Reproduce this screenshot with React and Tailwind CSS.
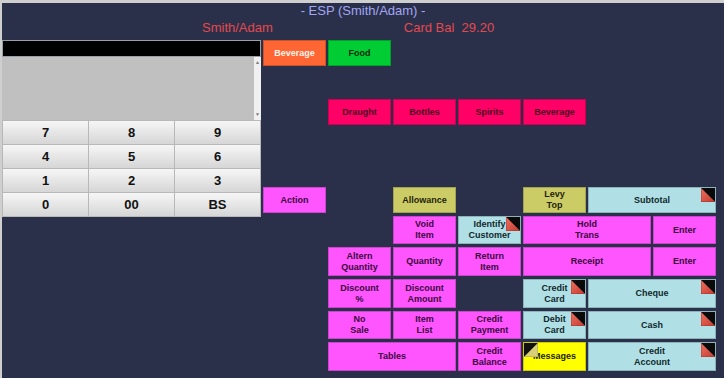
import React from 'react';

const KEYS = ['7', '8', '9', '4', '5', '6', '1', '2', '3', '0', '00', 'BS'];

const COLORS = {
    orange: 'bg-[#ff6633] text-[#fff4ee]',
    green: 'bg-[#00cc33] text-[#0b2a10]',
    crimson: 'bg-[#ff0066] text-[#4a0020]',
    pink: 'bg-[#ff55ff] text-[#3a0a3a]',
    khaki: 'bg-[#cccc66] text-[#1f1f0a]',
    blue: 'bg-[#b0e0e6] text-[#10282c]',
    yellow: 'bg-[#ffff00] text-[#222200]',
};

// row / col are grid lines (1-based), span is how many columns
const BUTTONS = [
    { label: 'Beverage', c: 'orange', row: 'row-start-1', col: 'col-start-1' },
    { label: 'Food', c: 'green', row: 'row-start-1', col: 'col-start-2' },

    { label: 'Draught', c: 'crimson', row: 'row-start-3', col: 'col-start-2' },
    { label: 'Bottles', c: 'crimson', row: 'row-start-3', col: 'col-start-3' },
    { label: 'Spirits', c: 'crimson', row: 'row-start-3', col: 'col-start-4' },
    { label: 'Beverage', c: 'crimson', row: 'row-start-3', col: 'col-start-5' },

    { label: 'Action', c: 'pink', row: 'row-start-5', col: 'col-start-1' },
    { label: 'Allowance', c: 'khaki', row: 'row-start-5', col: 'col-start-3' },
    { label: ['Levy', 'Top'], c: 'khaki', row: 'row-start-5', col: 'col-start-5' },
    { label: 'Subtotal', c: 'blue', row: 'row-start-5', col: 'col-start-6 col-span-2', fold: 'right' },

    { label: ['Void', 'Item'], c: 'pink', row: 'row-start-6', col: 'col-start-3' },
    { label: ['Identify', 'Customer'], c: 'blue', row: 'row-start-6', col: 'col-start-4', fold: 'right' },
    { label: ['Hold', 'Trans'], c: 'pink', row: 'row-start-6', col: 'col-start-5 col-span-2' },
    { label: 'Enter', c: 'pink', row: 'row-start-6', col: 'col-start-7' },

    { label: ['Altern', 'Quantity'], c: 'pink', row: 'row-start-7', col: 'col-start-2' },
    { label: 'Quantity', c: 'pink', row: 'row-start-7', col: 'col-start-3' },
    { label: ['Return', 'Item'], c: 'pink', row: 'row-start-7', col: 'col-start-4' },
    { label: 'Receipt', c: 'pink', row: 'row-start-7', col: 'col-start-5 col-span-2' },
    { label: 'Enter', c: 'pink', row: 'row-start-7', col: 'col-start-7' },

    { label: ['Discount', '%'], c: 'pink', row: 'row-start-8', col: 'col-start-2' },
    { label: ['Discount', 'Amount'], c: 'pink', row: 'row-start-8', col: 'col-start-3' },
    { label: ['Credit', 'Card'], c: 'blue', row: 'row-start-8', col: 'col-start-5', fold: 'right' },
    { label: 'Cheque', c: 'blue', row: 'row-start-8', col: 'col-start-6 col-span-2', fold: 'right' },

    { label: ['No', 'Sale'], c: 'pink', row: 'row-start-9', col: 'col-start-2' },
    { label: ['Item', 'List'], c: 'pink', row: 'row-start-9', col: 'col-start-3' },
    { label: ['Credit', 'Payment'], c: 'pink', row: 'row-start-9', col: 'col-start-4' },
    { label: ['Debit', 'Card'], c: 'blue', row: 'row-start-9', col: 'col-start-5', fold: 'right' },
    { label: 'Cash', c: 'blue', row: 'row-start-9', col: 'col-start-6 col-span-2', fold: 'right' },

    { label: 'Tables', c: 'pink', row: 'row-start-10', col: 'col-start-2 col-span-2' },
    { label: ['Credit', 'Balance'], c: 'pink', row: 'row-start-10', col: 'col-start-4' },
    { label: 'Messages', c: 'yellow', row: 'row-start-10', col: 'col-start-5', fold: 'left' },
    { label: ['Credit', 'Account'], c: 'blue', row: 'row-start-10', col: 'col-start-6 col-span-2', fold: 'right' },
];

const Fold = ({ side }) => {
    if (side === 'left') {
        return (
            <svg className="absolute left-0 top-0" width="14" height="14" viewBox="0 0 14 14">
                <polygon points="0,0 14,0 0,14" fill="#111" />
                <polygon points="14,0 14,14 0,14" fill="#d8cf78" />
                <polygon points="14,0 14,14 0,14" fill="none" stroke="#8a8440" strokeWidth="0.6" />
            </svg>
        );
    }
    return (
        <svg className="absolute right-0 top-0" width="14" height="14" viewBox="0 0 14 14">
            <defs>
                <linearGradient id="curl" x1="0" y1="0" x2="1" y2="1">
                    <stop offset="0" stopColor="#f07060" />
                    <stop offset="1" stopColor="#c23a30" />
                </linearGradient>
            </defs>
            <polygon points="0,0 14,0 14,14" fill="#0a0a0a" />
            <polygon points="0,0 14,14 0,14" fill="url(#curl)" />
            <polygon points="0,0 14,14 0,14" fill="none" stroke="#8a2a22" strokeWidth="0.6" />
        </svg>
    );
};

const PosButton = ({ b }) => {
    const lines = Array.isArray(b.label) ? b.label : [b.label];
    return (
        <div className={`${b.row} ${b.col} ${COLORS[b.c]} relative flex flex-col items-center justify-center border border-black/20 text-[9px] font-bold leading-[11px] font-['Liberation_Sans',Arial,sans-serif]`}>
            {b.fold && <Fold side={b.fold} />}
            {lines.map((l, i) => <span key={i}>{l}</span>)}
        </div>
    );
};

const App = () => {
    return (
        <div className="w-[724px] h-[378px] bg-[#2a3049] border-t-[3px] border-l-2 border-[#cfcfcf] overflow-hidden font-['Liberation_Sans',Arial,sans-serif]">
            {/* header */}
            <div className="h-[37px] flex flex-col">
                <div className="h-[15px] flex items-center justify-center text-[13px] leading-[15px] text-[#a3a6f2]">
                    - ESP (Smith/Adam) -
                </div>
                <div className="h-[22px] flex items-start pt-[2px] text-[13px] leading-[15px] text-[#e5484f]">
                    <span className="ml-[200px]">Smith/Adam</span>
                    <span className="ml-[131px]">Card Bal&nbsp;&nbsp;29.20</span>
                </div>
            </div>

            <div className="flex">
                {/* entry + keypad */}
                <div className="w-[259px] flex flex-col">
                    <div className="h-[17px] bg-black border border-[#9aa0a8]" />
                    <div className="h-[63px] bg-[#c0c0c0] flex justify-end">
                        <div className="w-[7px] h-full bg-[#f0f0f0] flex flex-col justify-between items-center text-[5px] leading-[7px] text-[#777] py-[2px]">
                            <span>▲</span>
                            <span>▼</span>
                        </div>
                    </div>
                    <div className="grid grid-cols-3 gap-[1px] bg-[#b8b8b8] border border-[#b8b8b8]">
                        {KEYS.map((k) => (
                            <div key={k} className="h-[23px] flex items-center justify-center bg-gradient-to-b from-[#f6f6f6] to-[#d6d6d6] text-[13px] font-bold text-[#111]">
                                {k}
                            </div>
                        ))}
                    </div>
                </div>

                {/* function buttons */}
                <div className="ml-[2px] grid grid-cols-[repeat(7,63px)] grid-rows-[26px_27px_26px_56px_26px_28px_29px_29px_28px_29px] gap-x-[2px] gap-y-[3px]">
                    {BUTTONS.map((b, i) => <PosButton key={i} b={b} />)}
                </div>
            </div>
        </div>
    );
};

export default App;
